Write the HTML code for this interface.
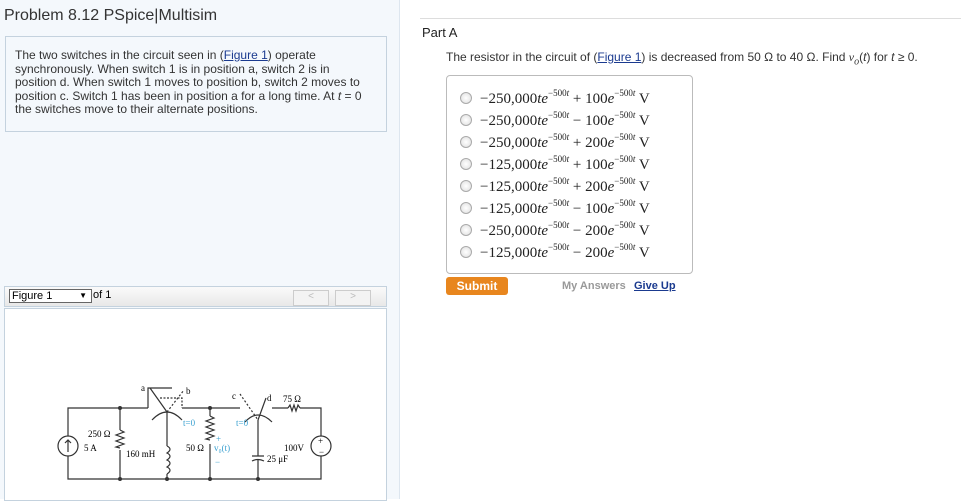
<!DOCTYPE html>
<html><head><style>
body{margin:0;width:961px;height:499px;position:relative;font-family:"Liberation Sans",Arial,sans-serif;background:#fff;overflow:hidden}
.left{position:absolute;left:0;top:0;width:399px;height:499px;background:#f4f8fc;border-right:1px solid #dde6ef}
.abs{position:absolute}
.opt{position:absolute;left:460px;font-family:"Liberation Serif",serif;font-size:15px;color:#222;white-space:nowrap}
.opt .r{display:inline-block;width:10px;height:10px;border-radius:50%;border:1px solid #aaa;background:radial-gradient(#fff,#ddd);vertical-align:-1px;margin-right:8px}
.opt sup{font-size:9px;vertical-align:7px}
</style></head><body>
<div class="left">
<div class="abs" style="left:4px;top:7px;font-size:16px;color:#333">Problem 8.12 PSpice|Multisim</div>
<div class="abs" style="left:5px;top:36px;width:380px;height:94px;border:1px solid #c4d2de;background:#f4f8fc"></div>
<div class="abs" style="left:15px;top:49px;width:352px;font-size:12px;line-height:13.5px;color:#333">The two switches in the circuit seen in (<u style="color:#1a3a8f">Figure 1</u>) operate synchronously. When switch 1 is in position a, switch 2 is in position d. When switch 1 moves to position b, switch 2 moves to position c. Switch 1 has been in position a for a long time. At <i>t</i> = 0 the switches move to their alternate positions.</div>
<div class="abs" style="left:4px;top:286px;width:381px;height:19px;border:1px solid #c4d2de;background:linear-gradient(#fafafa,#e8e8e8)"></div>
<div class="abs" style="left:9px;top:289px;width:79px;height:12px;border:1px solid #666;background:#fff;font-size:11px;line-height:12px;padding-left:2px">Figure 1<span style="position:absolute;right:4px;font-size:8px">▼</span></div>
<div class="abs" style="left:93px;top:289px;font-size:11px">of 1</div>
<div class="abs" style="left:293px;top:290px;width:34px;height:14px;border:1px solid #ccc;background:#f3f3f3;color:#bbb;font-size:10px;text-align:center">&lt;</div>
<div class="abs" style="left:335px;top:290px;width:34px;height:14px;border:1px solid #ccc;background:#f3f3f3;color:#bbb;font-size:10px;text-align:center">&gt;</div>
<div class="abs" style="left:4px;top:308px;width:381px;height:191px;border:1px solid #c4d2de;background:#fff"></div>
<svg class="abs" style="left:0;top:380px" width="340" height="119" font-family="Liberation Serif" font-size="9">
<g stroke="#333" fill="none" stroke-width="1.2">
<path d="M68 56V28H148M182 28H240M272 28H288M300 28H321V56M321 76V99H68V76"/>
<path d="M120 28V50M120 70V99M167 32V66M167 94V99M210 28V36M210 64V99M258 40V76M258 80V99"/>
<path d="M120 50l4 2-8 3 8 3-8 3 8 3-8 3 4 1"/>
<path d="M210 36l4 2-8 3 8 3-8 3 8 3-8 3 8 3-8 3 4 1"/>
<path d="M167 66q6 3 0 7q6 3 0 7q6 3 0 7q6 3 0 7"/>
<path d="M288 28l2-3 2 6 2-6 2 6 2-6 2 3"/>
<circle cx="68" cy="66" r="10" fill="#fff"/><path d="M68 72V60M65 63l3-3 3 3"/>
<circle cx="321" cy="66" r="10" fill="#fff"/>
<path d="M148 28V8H172M150 8L167 32M258 40L266 18"/>
<path d="M160 18H182V28" stroke-dasharray="2 1.5"/>
<path d="M167 32L184 10M240 14L258 40" stroke-dasharray="2 2"/>
<path d="M252 76h12M252 81q6-3 12 0"/>
<path d="M152 40q15-16 30 0M245 42q13-14 27 0"/>
</g>
<g fill="#333"><circle cx="120" cy="28" r="2"/><circle cx="210" cy="28" r="2"/><circle cx="120" cy="99" r="2"/><circle cx="167" cy="99" r="2"/><circle cx="210" cy="99" r="2"/><circle cx="258" cy="99" r="2"/></g>
<text x="141" y="11">a</text><text x="186" y="14">b</text><text x="232" y="19">c</text><text x="267" y="21">d</text>
<text x="283" y="22">75 Ω</text><text x="88" y="57">250 Ω</text><text x="84" y="71">5 A</text><text x="126" y="77">160 mH</text>
<text x="186" y="71">50 Ω</text><text x="284" y="71">100V</text><text x="267" y="82">25 μF</text><text x="318" y="64">+</text><text x="319" y="75">−</text>
<g fill="#3aa0d0"><text x="183" y="46">t=0</text><text x="216" y="62">+</text><text x="236" y="46">t=0</text><text x="214" y="71">v₀(t)</text><text x="215" y="85">−</text></g>
</svg>
</div>
<div class="abs" style="left:420px;top:18px;width:541px;height:1px;background:#ddd"></div>
<div class="abs" style="left:422px;top:25px;font-size:13px;color:#222">Part A</div>
<div class="abs" style="left:446px;top:50px;font-size:12px;color:#333">The resistor in the circuit of (<u style="color:#1a3a8f">Figure 1</u>) is decreased from 50 Ω to 40 Ω. Find <i style="font-family:'Liberation Serif'">v<sub>o</sub></i>(<i>t</i>) for <i>t</i> ≥ 0.</div>
<div class="abs" style="left:446px;top:75px;width:245px;height:197px;border:1px solid #bbb;border-radius:4px"></div>
<div class="opt" style="top:88px"><span class="r"></span>−250,000<i>te</i><sup>−500<i>t</i></sup> + 100<i>e</i><sup>−500<i>t</i></sup> V</div>
<div class="opt" style="top:110px"><span class="r"></span>−250,000<i>te</i><sup>−500<i>t</i></sup> − 100<i>e</i><sup>−500<i>t</i></sup> V</div>
<div class="opt" style="top:132px"><span class="r"></span>−250,000<i>te</i><sup>−500<i>t</i></sup> + 200<i>e</i><sup>−500<i>t</i></sup> V</div>
<div class="opt" style="top:154px"><span class="r"></span>−125,000<i>te</i><sup>−500<i>t</i></sup> + 100<i>e</i><sup>−500<i>t</i></sup> V</div>
<div class="opt" style="top:176px"><span class="r"></span>−125,000<i>te</i><sup>−500<i>t</i></sup> + 200<i>e</i><sup>−500<i>t</i></sup> V</div>
<div class="opt" style="top:198px"><span class="r"></span>−125,000<i>te</i><sup>−500<i>t</i></sup> − 100<i>e</i><sup>−500<i>t</i></sup> V</div>
<div class="opt" style="top:220px"><span class="r"></span>−250,000<i>te</i><sup>−500<i>t</i></sup> − 200<i>e</i><sup>−500<i>t</i></sup> V</div>
<div class="opt" style="top:242px"><span class="r"></span>−125,000<i>te</i><sup>−500<i>t</i></sup> − 200<i>e</i><sup>−500<i>t</i></sup> V</div>
<div class="abs" style="left:446px;top:277px;width:62px;height:18px;background:#e8861e;border-radius:3px;color:#fff;font-size:12px;font-weight:bold;text-align:center;line-height:18px">Submit</div>
<div class="abs" style="left:562px;top:280px;font-size:11px;font-weight:bold;color:#999">My Answers</div>
<div class="abs" style="left:634px;top:280px;font-size:11px;font-weight:bold;color:#1a3a8f;text-decoration:underline">Give Up</div>
</body></html>
